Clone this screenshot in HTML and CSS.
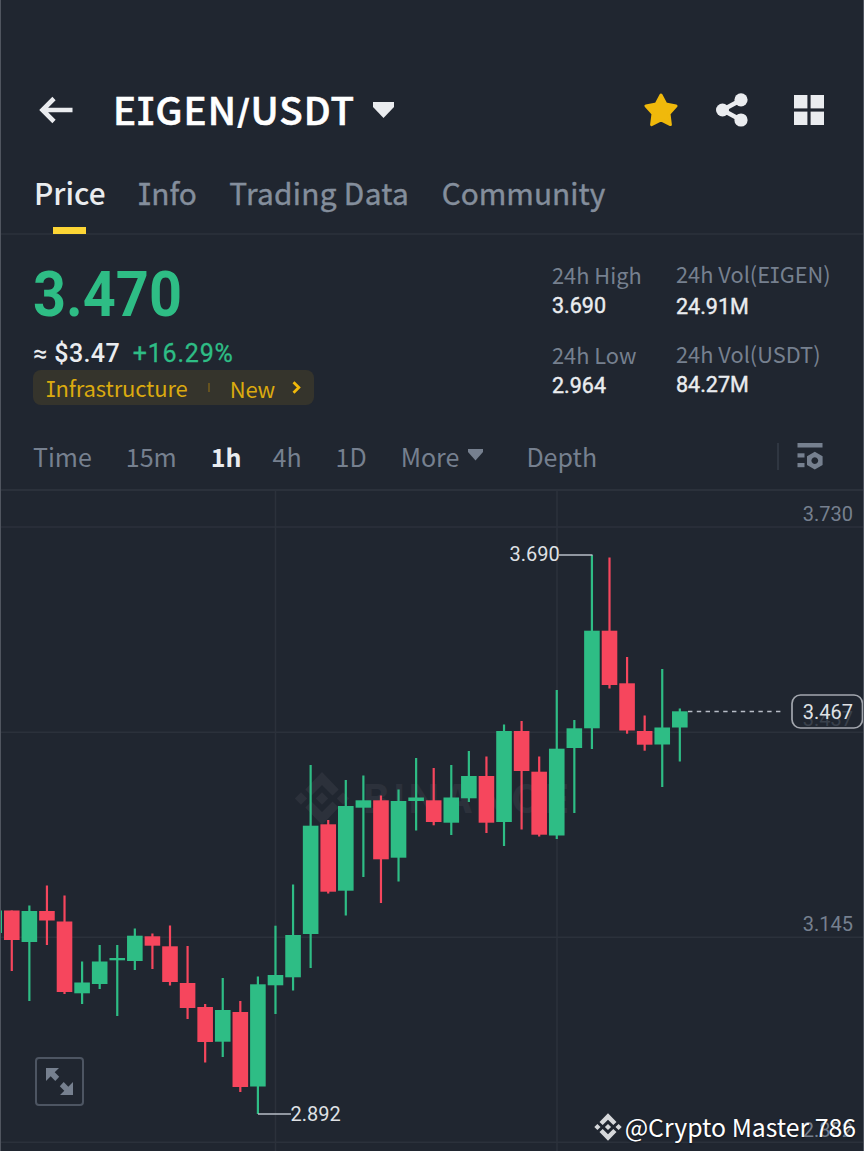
FILE: index.html
```html
<!DOCTYPE html>
<html lang="en">
<head>
    <meta charset="UTF-8">
    <meta name="viewport" content="width=device-width, initial-scale=1.0">
    <title>EIGEN/USDT</title>
    <link rel="stylesheet" href="styles.css">
</head>
<body>
    <div class="app">
        <header class="header">
            <svg class="back" width="34" height="28" viewBox="0 0 34 28">
                <path d="M15 2.5 L3.5 14 L15 25.5 M3.5 14 H33.5" fill="none" stroke="#eaecef" stroke-width="4.6"/>
            </svg>
            <h1 class="pair">E<span class="slab">I</span>GEN<span class="slash">/</span>USDT</h1>
            <svg class="pair-caret" width="21" height="16" viewBox="0 0 21 16">
                <path d="M0 0 H21 V5 L10.5 16 L0 5 Z" fill="#eaecef"/>
            </svg>
            <div class="actions">
                <svg width="34" height="34" viewBox="0 0 34 34">
                    <path d="M17 2 L21.8 11 L32 12.9 L25 20.7 L26.4 31.6 L17 27 L7.6 31.6 L9 20.7 L2 12.9 L12.2 11 Z" fill="#f0b90b" stroke="#f0b90b" stroke-width="3" stroke-linejoin="round"/>
                </svg>
                <svg width="32" height="34" viewBox="0 0 32 34">
                    <path d="M25 7 L6.5 17 L25 27" fill="none" stroke="#eaecef" stroke-width="4.4"/>
                    <circle cx="6.5" cy="17" r="6.5" fill="#eaecef"/>
                    <circle cx="25" cy="6.8" r="6.6" fill="#eaecef"/>
                    <circle cx="25" cy="27" r="6.6" fill="#eaecef"/>
                </svg>
                <svg width="30" height="30" viewBox="0 0 30 30" fill="#eaecef">
                    <rect width="13.4" height="13.4"/>
                    <rect x="16.6" width="13.4" height="13.4"/>
                    <rect y="16.6" width="13.4" height="13.4"/>
                    <rect x="16.6" y="16.6" width="13.4" height="13.4"/>
                </svg>
            </div>
        </header>

        <nav class="tabs">
            <a class="tab active">Price</a>
            <a class="tab"><span class="slab">I</span>nfo</a>
            <a class="tab trading">Trading Data</a>
            <a class="tab">Community</a>
        </nav>

        <section class="summary">
            <div class="quote">
                <div class="last-price">3.470</div>
                <div class="fiat"><span>≈ $3.47</span> <span class="change">+16.29%</span></div>
                <div class="tags">
                    <span><span class="slab">I</span>nfrastructure</span>
                    <i class="tag-sep"></i>
                    <span>New</span>
                    <svg width="9" height="13" viewBox="0 0 9 13">
                        <path d="M1.5 1.3 L6.8 6.5 L1.5 11.7" fill="none" stroke="#f0b90b" stroke-width="2.8"/>
                    </svg>
                </div>
            </div>
            <dl class="stats">
                <div><dt>24h High</dt><dd>3.690</dd></div>
                <div class="vol"><dt>24h Vol(E<span class="slab">I</span>GEN)</dt><dd>24.91M</dd></div>
                <div><dt>24h Low</dt><dd>2.964</dd></div>
                <div class="vol"><dt>24h Vol(USDT)</dt><dd>84.27M</dd></div>
            </dl>
        </section>

        <nav class="intervals">
            <a>Time</a>
            <a>15m</a>
            <a class="active">1h</a>
            <a>4h</a>
            <a>1D</a>
            <a class="more">More
                <svg width="15" height="12" viewBox="0 0 15 12"><path d="M0 0 H15 V3 L7.5 11.5 L0 3 Z" fill="#76808f"/></svg>
            </a>
            <a class="depth">Depth</a>
            <svg class="chart-settings" width="26" height="27" viewBox="0 0 26 27" fill="#76808f">
                <rect x="0.5" y="0" width="25" height="4.5"/>
                <rect x="0.5" y="10.3" width="7" height="4.2"/>
                <rect x="0.5" y="20" width="7" height="4.2"/>
                <path fill-rule="evenodd" d="M17.8 8.8 L25.6 13.2 V22 L17.8 26.4 L10 22 V13.2 Z M17.8 14.2 a3.4 3.4 0 1 0 0.01 0 Z"/>
            </svg>
        </nav>

        <main class="chart">
            <svg id="chart" width="864" height="660" viewBox="0 491 864 660">
                <g class="grid">
                    <path d="M0 527 H864 M0 732.3 H864 M0 937.3 H864 M0 1142.3 H864 M275.5 490 V1151 M557 490 V1151"/>
                </g>
                <g class="brand">
                    <path d="M305.3 789.5 L322 772 L338.7 789.5 L332.5 795.5 L322 785 L311.5 795.5 Z"/>
                    <path d="M305.3 807.5 L322 825 L338.7 807.5 L332.5 801.5 L322 812 L311.5 801.5 Z"/>
                    <path d="M322 792.3 l6.2 6.2 l-6.2 6.2 l-6.2 -6.2 Z M301 792.3 l6.2 6.2 l-6.2 6.2 l-6.2 -6.2 Z M343 792.3 l6.2 6.2 l-6.2 6.2 l-6.2 -6.2 Z"/>
                    <text x="363" y="813.3" textLength="206">BINANCE</text>
                </g>
                <g class="axis">
                    <text x="853" y="521">3.730</text>
                    <text class="covered" x="853" y="726">3.437</text>
                    <text x="853" y="931">3.145</text>
                    <text x="853" y="1136.5">2.852</text>
                </g>
                <g id="candles"></g>
                <path class="marker" d="M559 555 H592.5 M258 1114 H291"/>
                <text class="marker-label" x="509.5" y="561">3.690</text>
                <text class="marker-label" x="290.5" y="1121">2.892</text>
                <path class="last-line" d="M688 711.5 H781"/>
                <rect class="last-box" x="792" y="695" width="70.5" height="33" rx="8.5"/>
                <text class="last-label" x="853" y="719">3.467</text>
            </svg>
            <button class="expand" aria-label="Full screen">
                <svg width="27" height="27" viewBox="0 0 27 27" fill="#76808f">
                    <path d="M0 0 H13 L8.7 4.3 L13.2 8.8 L9.3 12.9 L4.7 8.3 L0 13 Z"/>
                    <path d="M27 27 H14 L18.3 22.7 L13.8 18.2 L17.7 14.1 L22.3 18.7 L27 14 Z"/>
                </svg>
            </button>
            <div class="credit">
                <svg width="28" height="28" viewBox="0 0 28 28" fill="#d5d7da">
                    <path d="M5.5 9 L14 0.3 L22.5 9 L19.3 12 L14 6.7 L8.7 12 Z M5.5 19 L14 27.7 L22.5 19 L19.3 16 L14 21.3 L8.7 16 Z"/>
                    <path d="M14 10.9 l3.1 3.1 l-3.1 3.1 l-3.1 -3.1 Z M3.4 10.9 l3.1 3.1 l-3.1 3.1 l-3.1 -3.1 Z M24.6 10.9 l3.1 3.1 l-3.1 3.1 l-3.1 -3.1 Z"/>
                </svg>
                <span>@Crypto Master 786</span>
            </div>
        </main>
    </div>

    <script>
        // [direction, wick top, body top, body bottom, wick bottom]
        const candles = [
            ['up', 910.5, 910.5, 933, 933],
            ['down', 910.5, 910.5, 940, 971],
            ['up', 905.5, 911, 942, 1001],
            ['down', 885.5, 911, 920.5, 945],
            ['down', 895.5, 921.5, 992, 994],
            ['up', 961.5, 982.5, 993.3, 1004],
            ['up', 945, 961.5, 984, 989],
            ['up', 945, 958, 960.3, 1016],
            ['up', 928.5, 935.7, 961, 970],
            ['down', 933.5, 936.3, 945.7, 969],
            ['down', 925.5, 946.3, 982, 985.5],
            ['down', 946, 983, 1008, 1019],
            ['down', 1004, 1007, 1042, 1062.5],
            ['up', 978, 1010, 1041.7, 1057],
            ['down', 1001, 1012, 1087, 1092],
            ['up', 976.5, 984.3, 1086.5, 1114],
            ['up', 925.7, 975, 985.3, 1014],
            ['up', 884.5, 935, 977.3, 990.5],
            ['up', 765, 825.7, 934, 968],
            ['down', 820, 824.3, 891.7, 893.5],
            ['up', 780, 806, 890.7, 915.5],
            ['up', 775.5, 800.3, 807.7, 877],
            ['down', 795.5, 800.3, 859.3, 903],
            ['up', 789.5, 801, 857.7, 881.5],
            ['up', 758, 797.5, 801, 830.5],
            ['down', 768, 800.3, 822, 825.3],
            ['up', 765, 797.5, 822.7, 835],
            ['up', 751, 776, 798.3, 802],
            ['down', 756.5, 776, 822.7, 833],
            ['up', 724.5, 731, 822, 846],
            ['down', 721, 731, 771, 829.5],
            ['down', 756.5, 771.7, 834.7, 836.5],
            ['up', 690, 748.7, 835.5, 839],
            ['up', 720, 728.3, 748, 813],
            ['up', 555, 630.7, 728.3, 749],
            ['down', 557.5, 630.7, 685, 688.5],
            ['down', 657, 683.3, 730.5, 733.7],
            ['down', 715.5, 731, 744.7, 750.7],
            ['up', 669, 727.5, 744.5, 787],
            ['up', 708.5, 711.3, 727.5, 761.5]
        ];
        const step = 17.58;
        const bodyWidth = 15.6;

        document.getElementById('candles').innerHTML = candles.map(([dir, high, top, bottom, low], i) => {
            const x = -5.8 + i * step;
            return `<g class="${dir}">
                <rect x="${x - 1.1}" y="${high}" width="2.2" height="${low - high}"/>
                <rect x="${x - bodyWidth / 2}" y="${top}" width="${bodyWidth}" height="${bottom - top}"/>
            </g>`;
        }).join('');
    </script>
</body>
</html>
```
FILE: styles.css
```css
:root {
    --bg: #202630;
    --line: #2b313b;
    --text: #eaecef;
    --muted: #848e9c;
    --dim: #76808f;
    --green: #2ebd85;
    --red: #f6465d;
    --yellow: #f0b90b;
}

* {
    box-sizing: border-box;
    margin: 0;
    padding: 0;
}

body {
    background: var(--bg);
    color: var(--text);
    font-family: "Noto Sans CJK SC", "Noto Sans", sans-serif;
}

svg {
    display: block;
    flex: none;
}

.app {
    width: 864px;
    height: 1151px;
    overflow: hidden;
    display: flex;
    flex-direction: column;
    position: relative;
}

/* thin frame on both sides, over the chart too */
.app::after {
    content: "";
    position: absolute;
    inset: 0;
    border-left: 1px solid #50555f;
    border-right: 1px solid #50555f;
    pointer-events: none;
}

/* capital I with serifs */
.slab {
    font-family: Inter, sans-serif;
    font-feature-settings: "cv08";
}

.header {
    height: 165px;
    padding: 55px 40px 0 39px;
    display: flex;
    align-items: center;
}

.pair {
    margin-left: 40px;
    font-size: 38.5px;
    font-weight: 500;
    line-height: 50px;
    letter-spacing: 1px;
    color: #fff;
    -webkit-text-stroke: 0.6px #fff;
}

.slash {
    font-family: Inter, sans-serif;
    font-size: 34px;
    vertical-align: 1px;
}

.pair-caret {
    margin: 0 0 1px auto;
}

.actions {
    margin-left: 250px;
    display: flex;
    align-items: center;
    gap: 38px;
}

.actions svg:last-child {
    margin-left: 8px;
}

.tabs {
    height: 70px;
    padding-left: 34px;
    display: flex;
    gap: 32.5px;
    border-bottom: 2px solid #282e38;
}

.tab {
    font-size: 29.8px;
    line-height: 54px;
    color: var(--muted);
    -webkit-text-stroke: 0.4px var(--muted);
    position: relative;
}

.tab.active {
    color: var(--text);
    font-weight: 500;
    -webkit-text-stroke: 0;
}

.tab.active::after {
    content: "";
    position: absolute;
    left: 19px;
    bottom: -1px;
    width: 33px;
    height: 7px;
    background: #fcd535;
}

.tab.trading {
    letter-spacing: 0.3px;
}

.summary {
    height: 190px;
    padding-left: 33px;
    display: flex;
}

.quote {
    width: 519px;
}

.last-price {
    margin-top: 28px;
    font: 700 63px/64px Roboto, sans-serif;
    color: var(--green);
    transform: scaleX(0.915);
    transform-origin: left;
}

.fiat {
    margin-top: 10px;
    font: 500 25px/33px Roboto, sans-serif;
    letter-spacing: 0.4px;
}

.change {
    margin-left: 6px;
    color: var(--green);
    letter-spacing: 0.8px;
    font-weight: 400;
    -webkit-text-stroke: 0.3px var(--green);
}

.tags {
    display: inline-flex;
    align-items: center;
    height: 35px;
    padding: 0 13px;
    border-radius: 8px;
    background: #35342c;
    color: #dbaa0f;
    font-size: 22px;
    line-height: 34px;
    letter-spacing: -0.15px;
}

.tag-sep {
    width: 2px;
    height: 9px;
    margin: 0 20px;
    background: #66531f;
}

.tags svg {
    margin-left: 17px;
}

.stats {
    display: grid;
    grid-template-columns: 124px auto;
    grid-auto-rows: 80px;
    align-content: start;
    padding-top: 24px;
}

.stats dt {
    font-size: 21.8px;
    line-height: 31px;
    color: var(--dim);
}

.stats dd {
    margin-top: 1px;
    font: 400 21.5px/30px Roboto, sans-serif;
    -webkit-text-stroke: 0.4px var(--text);
}

.stats .vol {
    margin-top: -1px;
}

.intervals {
    height: 66px;
    padding: 0 40px 2px 33px;
    display: flex;
    align-items: center;
    gap: 34px;
    border-bottom: 2px solid var(--line);
    font-size: 25px;
    line-height: 60px;
    color: var(--dim);
}

.intervals .active {
    margin-right: -3px;
    color: var(--text);
    font-weight: 700;
}

.more {
    display: flex;
    align-items: center;
    gap: 9px;
}

.more svg {
    margin-bottom: 3px;
}

.depth {
    margin-left: 9px;
}

.chart-settings {
    margin-left: auto;
    margin-right: 1px;
    box-sizing: content-box;
    padding-left: 18px;
    border-left: 2px solid #2f3641;
}

.chart {
    position: relative;
    height: 660px;
}

.chart svg text {
    font-family: Roboto, sans-serif;
    font-size: 20px;
}

.grid path {
    fill: none;
    stroke: var(--line);
    stroke-width: 1.6;
}

.brand {
    fill: #2c313b;
}

.chart .brand text {
    font: 700 40px Inter, sans-serif;
}

.axis,
.last-label {
    fill: var(--dim);
    text-anchor: end;
}

.axis .covered {
    fill: #3a414c;
}

.up {
    fill: var(--green);
}

.down {
    fill: var(--red);
}

.marker {
    fill: none;
    stroke: #b7bdc6;
    stroke-width: 1.5;
}

.marker-label,
.last-label {
    fill: #dfe1e5;
}

.last-line {
    stroke: #b7bdc6;
    stroke-width: 1.5;
    stroke-dasharray: 4.4 4.4;
}

.last-box {
    fill: none;
    stroke: #a3a7ae;
    stroke-width: 1.7;
}

.expand {
    position: absolute;
    left: 35px;
    bottom: 45px;
    width: 49px;
    height: 49px;
    display: flex;
    align-items: center;
    justify-content: center;
    background: none;
    border: 2px solid #4d5562;
    border-radius: 4px;
}

.credit {
    position: absolute;
    right: 8px;
    bottom: 8px;
    display: flex;
    align-items: center;
    gap: 3px;
    font-size: 24.8px;
    line-height: 34px;
    color: #fff;
    text-shadow: 0 1px 2px rgba(0, 0, 0, 0.5);
}

.credit span {
    margin-top: -1px;
}
```
